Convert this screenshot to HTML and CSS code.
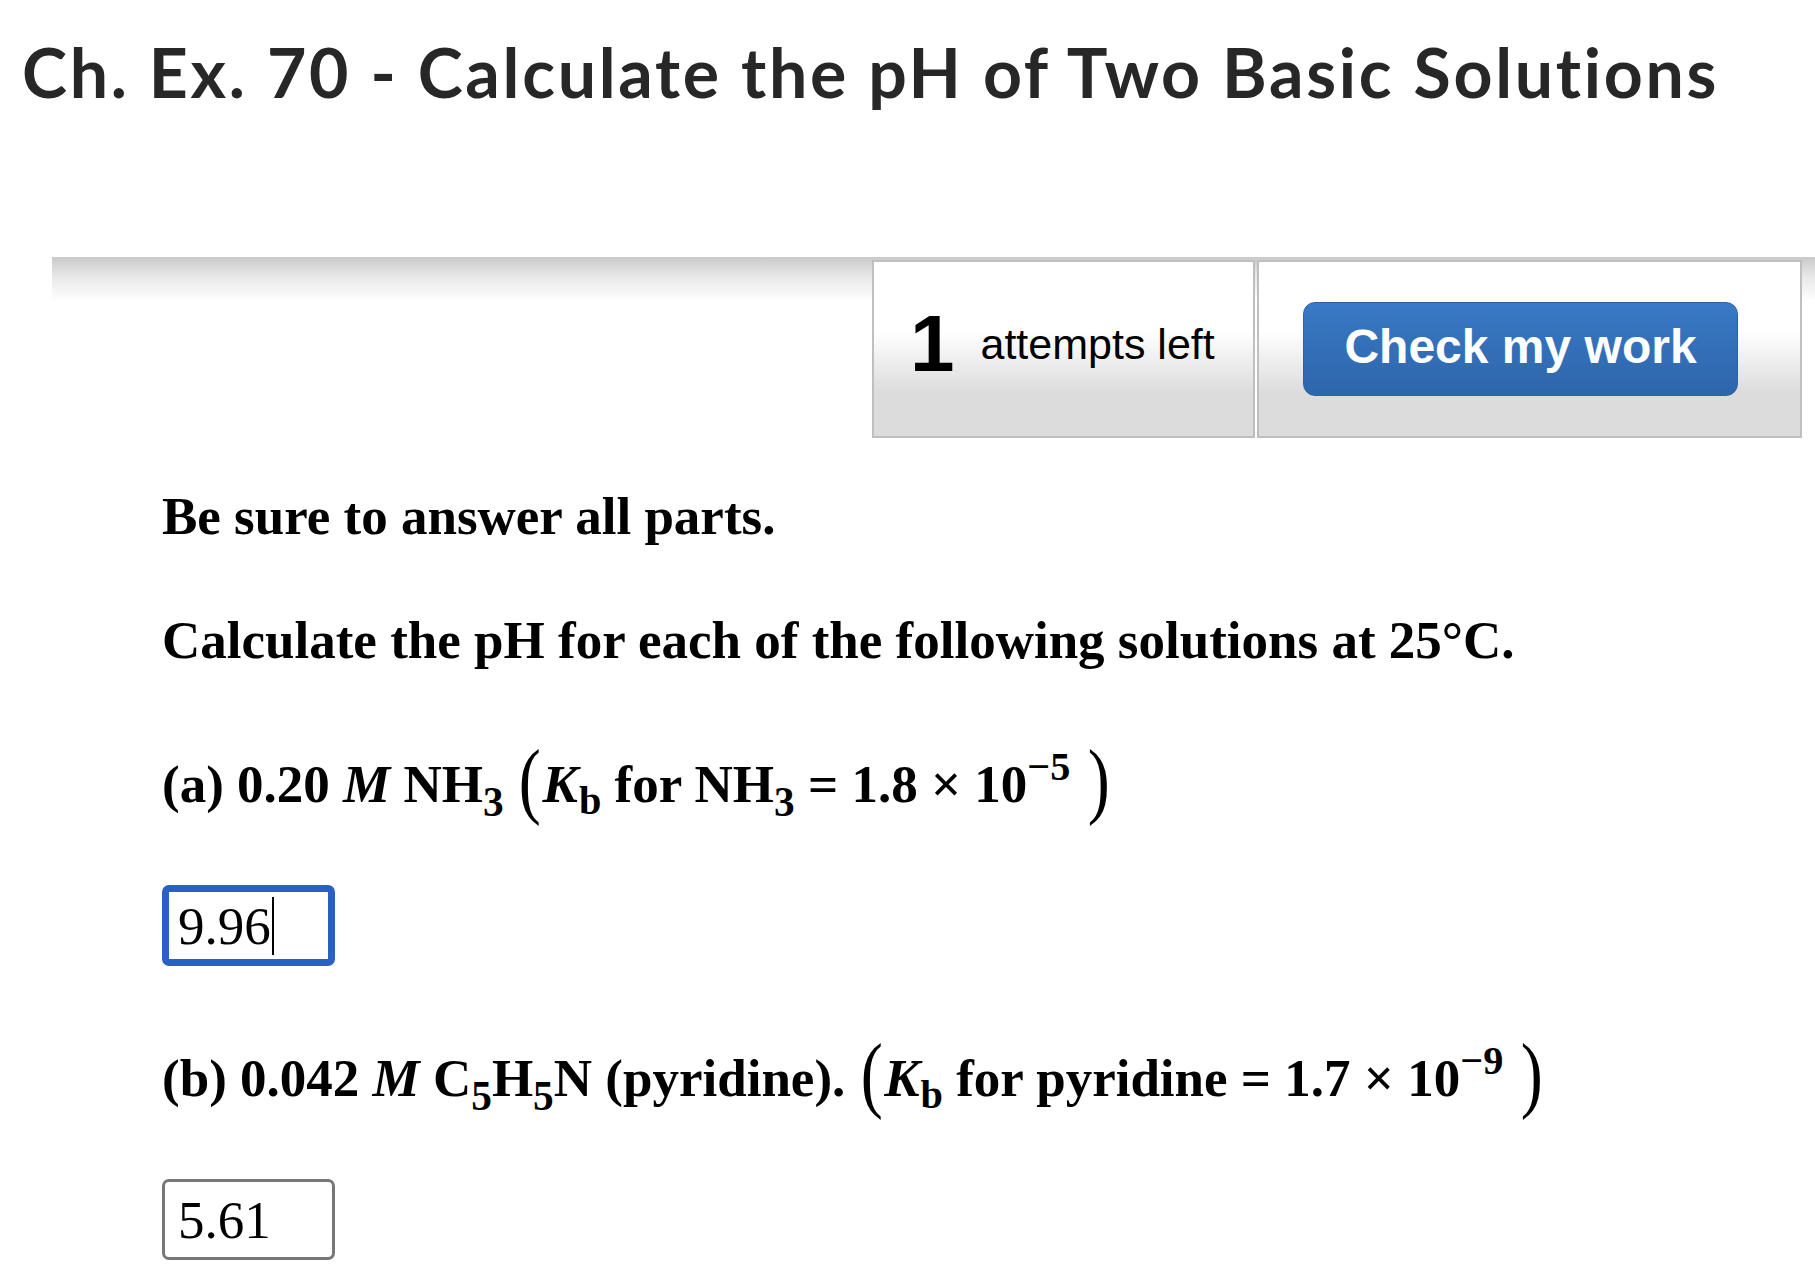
FILE: index.html
```html
<!DOCTYPE html>
<html lang="en">
<head>
<meta charset="utf-8">
<title>Ch. Ex. 70 - Calculate the pH of Two Basic Solutions</title>
<link rel="stylesheet" href="styles.css">
</head>
<body>
<h1 class="title">Ch. Ex. 70 - Calculate the pH of Two Basic Solutions</h1>

<div class="toolbar">
  <div class="tool-box attempts">
    <span class="attempts-num">1</span>
    <span class="attempts-label">attempts left</span>
  </div>
  <div class="tool-box check">
    <button class="check-btn" type="button">Check my work</button>
  </div>
</div>

<main class="question">
  <p class="instr">Be sure to answer all parts.</p>
  <p class="prompt">Calculate the pH for each of the following solutions at 25°C.</p>

  <p class="part">(a) 0.20 <i>M</i> NH<sub class="sb">3</sub> <span class="bigp">(</span><i>K</i><sub class="sk">b</sub> for NH<sub class="sb">3</sub> = 1.8 × 10<sup class="sp">−5</sup><span class="bigp close">)</span></p>
  <div class="answer focused">9.96<span class="caret"></span></div>

  <p class="part part-b">(b) 0.042 <i>M</i> C<sub class="sb">5</sub>H<sub class="sb">5</sub>N (pyridine). <span class="bigp">(</span><i>K</i><sub class="sk">b</sub> for pyridine = 1.7 × 10<sup class="sp">−9</sup><span class="bigp close">)</span></p>
  <div class="answer">5.61</div>
</main>
</body>
</html>
```

FILE: styles.css
```css
html, body {
  margin: 0;
  padding: 0;
  background: #ffffff;
}

body {
  font-family: "Liberation Serif", "Times New Roman", serif;
  color: #000;
  width: 1815px;
  overflow: hidden;
}

.title {
  margin: 32px 0 0 0;
  padding-left: 22px;
  font-family: Lato, "Open Sans", sans-serif;
  font-weight: 700;
  font-size: 68px;
  letter-spacing: 2.7px;
  line-height: 80px;
  color: #272727;
  white-space: nowrap;
}

.toolbar {
  margin: 145px 0 0 52px;
  padding: 3px 13px 0 0;
  display: flex;
  justify-content: flex-end;
  gap: 2px;
  background: linear-gradient(to bottom, #c9c9c9 0px, #e6e6e6 18px, #ffffff 44px);
}

.tool-box {
  box-sizing: border-box;
  height: 178px;
  border: 2px solid #bfbfbf;
  background: linear-gradient(to bottom, #ffffff 0%, #ffffff 40%, #dcdcdc 75%, #dcdcdc 100%);
  display: flex;
  align-items: center;
}

.attempts {
  width: 383px;
  padding-left: 36px;
  padding-bottom: 10px;
  gap: 26px;
  font-family: "Liberation Sans", Arial, sans-serif;
  color: #000;
}

.attempts-num {
  font-weight: 700;
  font-size: 80px;
  line-height: 1;
}

.attempts-label {
  font-size: 43px;
  line-height: 1;
}

.check {
  width: 545px;
  padding-left: 44px;
}

.check-btn {
  box-sizing: border-box;
  width: 435px;
  height: 94px;
  border: 1px solid #2c62a6;
  border-radius: 12px;
  background: linear-gradient(to bottom, #3979c6 0%, #336fb8 50%, #2e66ab 100%);
  color: #ffffff;
  font-family: "Liberation Sans", Arial, sans-serif;
  font-weight: 700;
  font-size: 48px;
  line-height: 1;
  padding: 0 0 4px 0;
  cursor: pointer;
}

.question {
  padding-left: 162px;
}

.question p {
  margin: 0;
  font-weight: 700;
  font-size: 53px;
  line-height: 60px;
  white-space: nowrap;
}

.instr {
  padding-top: 48px;
}

.prompt {
  padding-top: 64px;
}

.part {
  padding-top: 84px;
}

.part i {
  font-style: italic;
}

.sb {
  font-size: 0.78em;
  vertical-align: -14px;
  line-height: 0;
}

.sk {
  font-size: 0.76em;
  vertical-align: -12px;
  line-height: 0;
  margin-left: 1px;
}

.sp {
  font-size: 0.76em;
  vertical-align: 22px;
  line-height: 0;
}

.bigp {
  display: inline-block;
  font-weight: 400;
  transform: scale(1.25, 1.6);
  transform-origin: 50% 62%;
  margin: 0 4px;
}

.bigp.close {
  margin-left: 20px;
}

.answer {
  box-sizing: border-box;
  margin-top: 71px;
  width: 173px;
  height: 81px;
  border: 3px solid #777777;
  border-radius: 7px;
  padding-left: 13px;
  display: flex;
  align-items: center;
  font-family: "Liberation Serif", "Times New Roman", serif;
  font-size: 53px;
  font-weight: 400;
  color: #000;
}

.answer.focused {
  border: 7px solid #2b5fc8;
  padding-left: 9px;
}

.caret {
  display: inline-block;
  width: 2px;
  height: 58px;
  background: #000;
  margin-left: 1px;
}

.part-b {
  padding-top: 82px;
}
```
